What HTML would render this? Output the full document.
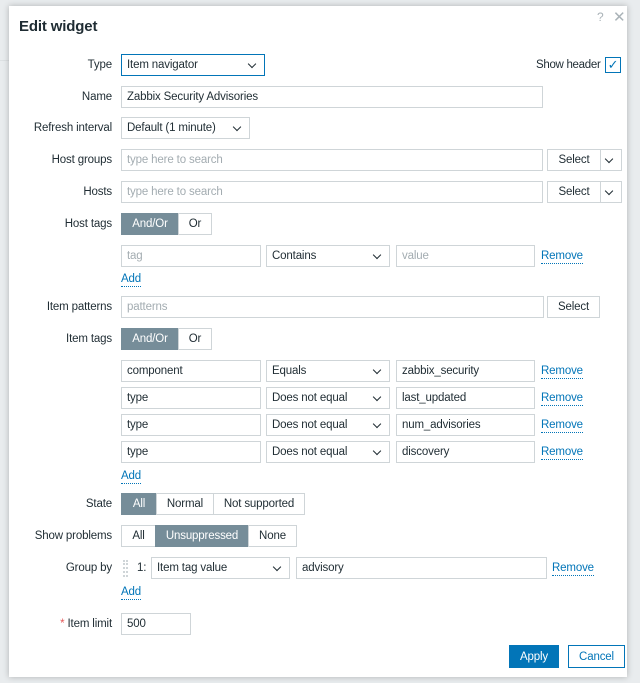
<!DOCTYPE html><html><head><style>
body{margin:0;width:640px;height:683px;background:#e9ecee;font-family:"Liberation Sans",Arial,sans-serif;font-size:11.5px;letter-spacing:-0.15px;color:#1f2c33;position:relative;overflow:hidden}
.dlg{position:absolute;left:9px;top:6px;width:618px;height:671px;background:#fff;box-shadow:0 0 6px rgba(0,0,0,.25)}
.a{position:absolute;box-sizing:border-box}
.lbl{position:absolute;right:528px;text-align:right;white-space:nowrap;line-height:22px}
.in{position:absolute;box-sizing:border-box;height:22px;border:1px solid #cfd5d8;background:#fff;padding:0 5px;line-height:21px;white-space:nowrap}
.ph{color:#a3acb1}
.sel::after{content:"";position:absolute;right:9px;top:6px;width:5px;height:5px;border-right:1.5px solid #1f2c33;border-bottom:1.5px solid #1f2c33;transform:rotate(45deg)}
.btn{position:absolute;box-sizing:border-box;height:22px;border:1px solid #cfd5d8;background:#fff;text-align:center;line-height:21px}
.on{background:#768d99;color:#fff;border-color:#768d99}
.lnk{position:absolute;color:#0275b8;border-bottom:1px dotted #0275b8;line-height:13px}
</style></head><body>
<div class="a" style="left:0;top:60px;width:9px;height:1px;background:#dde1e3"></div>
<div class="dlg"></div>
<div class="a" style="left:19px;top:18px;font-size:15px;font-weight:bold;color:#1f2c33">Edit widget</div>
<div class="a" style="left:597px;top:10px;color:#aab3b8;font-size:12px">?</div>
<div class="a" style="left:613px;top:8px;color:#aab3b8;font-size:15px">✕</div>

<div class="lbl" style="top:54px">Type</div>
<div class="in sel" style="left:121px;top:54px;width:144px;border-color:#0275b8">Item navigator</div>
<div class="a" style="left:536px;top:58px;line-height:14px;font-size:11.5px;letter-spacing:-0.3px">Show header</div>
<div class="a" style="left:605px;top:57px;width:16px;height:16px;border:1px solid #0275b8;color:#0275b8;font-size:13px;line-height:14px;text-align:center">✓</div>

<div class="lbl" style="top:86px">Name</div>
<div class="in" style="left:121px;top:86px;width:422px">Zabbix Security Advisories</div>

<div class="lbl" style="top:117px">Refresh interval</div>
<div class="in sel" style="left:121px;top:117px;width:129px">Default (1 minute)</div>

<div class="lbl" style="top:149px">Host groups</div>
<div class="in ph" style="left:121px;top:149px;width:422px">type here to search</div>
<div class="btn" style="left:547px;top:149px;width:54px">Select</div>
<div class="btn sel" style="left:600px;top:149px;width:22px"></div>

<div class="lbl" style="top:181px">Hosts</div>
<div class="in ph" style="left:121px;top:181px;width:422px">type here to search</div>
<div class="btn" style="left:547px;top:181px;width:54px">Select</div>
<div class="btn sel" style="left:600px;top:181px;width:22px"></div>

<div class="lbl" style="top:213px">Host tags</div>
<div class="btn on" style="left:121px;top:213px;width:58px">And/Or</div>
<div class="btn" style="left:178px;top:213px;width:34px">Or</div>

<div class="in ph" style="left:121px;top:245px;width:140px">tag</div>
<div class="in sel" style="left:266px;top:245px;width:124px">Contains</div>
<div class="in ph" style="left:396px;top:245px;width:139px">value</div>
<div class="lnk" style="left:541px;top:250px">Remove</div>
<div class="lnk" style="left:121px;top:273px">Add</div>

<div class="lbl" style="top:296px">Item patterns</div>
<div class="in ph" style="left:121px;top:296px;width:423px">patterns</div>
<div class="btn" style="left:547px;top:296px;width:53px">Select</div>

<div class="lbl" style="top:328px">Item tags</div>
<div class="btn on" style="left:121px;top:328px;width:58px">And/Or</div>
<div class="btn" style="left:178px;top:328px;width:34px">Or</div>

<div class="in" style="left:121px;top:360px;width:140px">component</div>
<div class="in sel" style="left:266px;top:360px;width:124px">Equals</div>
<div class="in" style="left:396px;top:360px;width:139px">zabbix_security</div>
<div class="lnk" style="left:541px;top:365px">Remove</div>

<div class="in" style="left:121px;top:387px;width:140px">type</div>
<div class="in sel" style="left:266px;top:387px;width:124px">Does not equal</div>
<div class="in" style="left:396px;top:387px;width:139px">last_updated</div>
<div class="lnk" style="left:541px;top:392px">Remove</div>

<div class="in" style="left:121px;top:414px;width:140px">type</div>
<div class="in sel" style="left:266px;top:414px;width:124px">Does not equal</div>
<div class="in" style="left:396px;top:414px;width:139px">num_advisories</div>
<div class="lnk" style="left:541px;top:419px">Remove</div>

<div class="in" style="left:121px;top:441px;width:140px">type</div>
<div class="in sel" style="left:266px;top:441px;width:124px">Does not equal</div>
<div class="in" style="left:396px;top:441px;width:139px">discovery</div>
<div class="lnk" style="left:541px;top:446px">Remove</div>
<div class="lnk" style="left:121px;top:470px">Add</div>

<div class="lbl" style="top:493px">State</div>
<div class="btn on" style="left:121px;top:493px;width:36px">All</div>
<div class="btn" style="left:156px;top:493px;width:58px">Normal</div>
<div class="btn" style="left:213px;top:493px;width:92px">Not supported</div>

<div class="lbl" style="top:525px">Show problems</div>
<div class="btn" style="left:121px;top:525px;width:35px">All</div>
<div class="btn on" style="left:155px;top:525px;width:94px">Unsuppressed</div>
<div class="btn" style="left:248px;top:525px;width:49px">None</div>

<div class="lbl" style="top:557px">Group by</div>
<div class="a" style="left:123px;top:560px;width:5px;height:17px;border-left:2px dotted #cfd5d8;border-right:2px dotted #cfd5d8"></div>
<div class="a" style="left:137px;top:557px;line-height:22px">1:</div>
<div class="in sel" style="left:151px;top:557px;width:139px">Item tag value</div>
<div class="in" style="left:296px;top:557px;width:251px">advisory</div>
<div class="lnk" style="left:552px;top:562px">Remove</div>
<div class="lnk" style="left:121px;top:586px">Add</div>

<div class="lbl" style="top:613px"><span style="color:#e45959">*</span> Item limit</div>
<div class="in" style="left:121px;top:613px;width:70px">500</div>

<div class="btn" style="left:509px;top:645px;width:50px;background:#0275b8;border-color:#0275b8;color:#fff;height:23px;line-height:22px">Apply</div>
<div class="btn" style="left:568px;top:645px;width:57px;border-color:#0275b8;color:#0275b8;height:23px;line-height:22px">Cancel</div>
</body></html>
